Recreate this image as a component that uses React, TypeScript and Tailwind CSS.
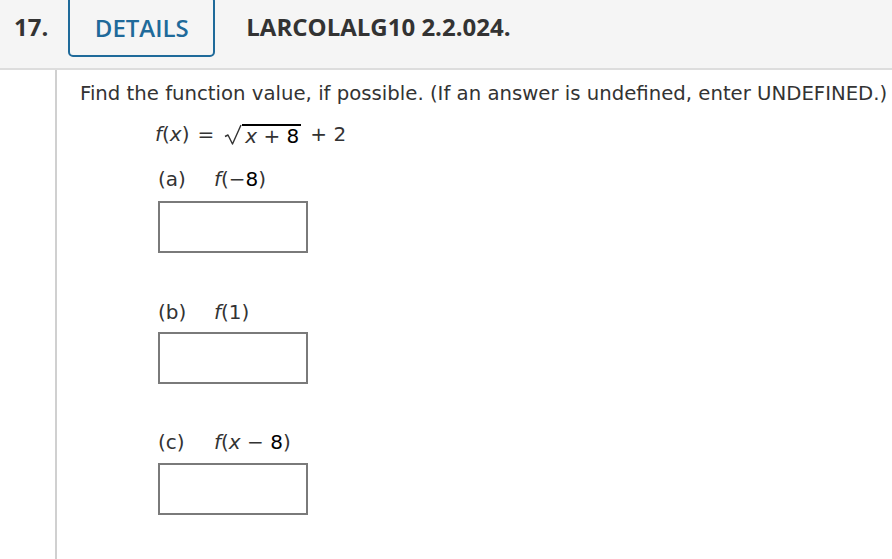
import React from 'react';

const body = { fontFamily: '"DejaVu Sans", Verdana, sans-serif' };

function Part({ label, gap, children }: { label: string; gap: number; children: React.ReactNode }) {
  return (
    <div className="ml-[101px]">
      <div className="flex items-center h-[24px] text-[20px] text-[#333]">
        <span className="w-[56px]">({label})</span>
        <span>{children}</span>
      </div>
      <div
        className="w-[150px] h-[52px] border-2 border-[#7a7a7a] bg-white"
        style={{ marginTop: gap }}
      />
    </div>
  );
}

export default function App() {
  return (
    <div className="w-[892px] h-[559px] bg-white overflow-hidden">
      {/* encabezado de la pregunta */}
      <div
        className="h-[70px] bg-[#f5f5f5] border-b-2 border-[#dddddd] flex items-start"
        style={{ fontFamily: '"Open Sans", sans-serif' }}
      >
        <span className="ml-[14px] mt-[9px] text-[24px] font-bold text-[#333]">17.</span>
        <div className="ml-[20px] -mt-[4px] h-[61px] w-[147px] border-2 border-[#1f6a9a] rounded-[5px] flex items-center justify-center pt-[3px]">
          <span className="text-[24px] font-semibold text-[#1f6a9a]">DETAILS</span>
        </div>
        <span className="ml-[31px] mt-[9px] text-[24px] font-bold text-[#333]">LARCOLALG10 2.2.024.</span>
      </div>

      {/* cuerpo */}
      <div className="ml-[55px] border-l-2 border-[#d0d0d0] h-[489px] pt-[12px]" style={body}>
        <p className="ml-[23px] text-[19.7px] text-[#333] whitespace-nowrap leading-[24px]">
          Find the function value, if possible. (If an answer is undefined, enter UNDEFINED.)
        </p>

        <div className="ml-[98px] mt-[16px] flex items-center h-[24px] text-[20px] text-[#333]">
          <span className="italic">f</span>
          <span>(</span>
          <span className="italic">x</span>
          <span>)</span>
          <span className="ml-[8px] mr-[10px]">=</span>
          <span className="flex items-start mt-[2px]">
            {/* signo de raíz */}
            <svg width="18" height="21" viewBox="0 0 18 21" className="block">
              <path d="M1 12.5 L4 11 L8.5 20 L17 1" fill="none" stroke="#333" strokeWidth="1.4" strokeLinejoin="round" />
            </svg>
            <span className="border-t-2 border-black pl-[3px] pr-[2px] leading-[21px]">
              <span className="italic">x</span> + <span className="text-black">8</span>
            </span>
          </span>
          <span className="ml-[9px]">+ 2</span>
        </div>

        <div className="mt-[21px]">
          <Part label="a" gap={10}>
            <span className="italic">f</span>(−<span className="text-black">8</span>)
          </Part>
        </div>
        <div className="mt-[47px]">
          <Part label="b" gap={8}>
            <span className="italic">f</span>(1)
          </Part>
        </div>
        <div className="mt-[46px]">
          <Part label="c" gap={9}>
            <span className="italic">f</span>(<span className="italic">x</span> − <span className="text-black">8</span>)
          </Part>
        </div>
      </div>
    </div>
  );
}
